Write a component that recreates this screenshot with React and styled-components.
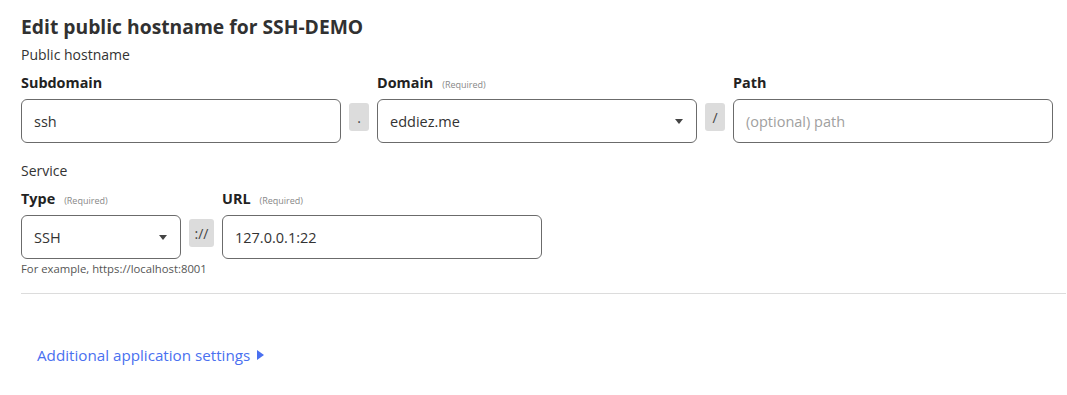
import React from 'react';
import styled, { createGlobalStyle } from 'styled-components';

const GlobalStyle = createGlobalStyle`
  body {
    margin: 0;
    background: #fff;
    font-family: "Open Sans", "Noto Sans", sans-serif;
    color: #333;
  }
`;

const Page = styled.div`
  padding: 15px 1px 0 21px;
`;

const Title = styled.h2`
  margin: 0;
  font-size: 19.3px;
  line-height: 24px;
  font-weight: 700;
  color: #313131;
`;

const SectionLabel = styled.div`
  margin-top: ${(p) => p.$top || 6}px;
  font-size: 14px;
  line-height: 20px;
  color: #333;
`;

const Row = styled.div`
  display: flex;
  align-items: flex-start;
  gap: 8px;
  margin-top: 8px;
`;

const Field = styled.div`
  display: flex;
  flex-direction: column;
  width: ${(p) => p.$width}px;
`;

const Label = styled.label`
  display: flex;
  align-items: baseline;
  height: 20px;
  margin-bottom: 6px;
  font-size: 14.4px;
  line-height: 20px;
  font-weight: 700;
  color: #222;
`;

const Required = styled.span`
  margin-left: 9px;
  font-size: 9px;
  font-weight: 400;
  color: #888;
`;

const Input = styled.div`
  box-sizing: border-box;
  display: flex;
  align-items: center;
  justify-content: space-between;
  height: 44px;
  padding: 0 13px 0 12px;
  border: 1px solid #6b6b6b;
  border-radius: 6px;
  font-size: 14.5px;
  color: ${(p) => (p.$placeholder ? '#a0a0a0' : '#333')};
`;

const Caret = styled.span`
  width: 0;
  height: 0;
  border-left: 4px solid transparent;
  border-right: 4px solid transparent;
  border-top: 5px solid #444;
`;

const Separator = styled.div`
  box-sizing: border-box;
  display: flex;
  align-items: center;
  justify-content: center;
  width: ${(p) => p.$width || 20}px;
  height: 28px;
  margin-top: 30px;
  border-radius: 3px;
  background: #dcdcdc;
  font-size: 14px;
  color: #444;
`;

const Hint = styled.div`
  margin-top: 3px;
  font-size: 11.3px;
  line-height: 14px;
  color: #555;
  white-space: nowrap;
`;

const Divider = styled.hr`
  margin: 17px 0 0;
  border: 0;
  border-top: 1px solid #dcdcdc;
`;

const Link = styled.a`
  display: inline-flex;
  align-items: center;
  gap: 7px;
  margin: 51px 0 0 16px;
  font-size: 15.2px;
  line-height: 20px;
  color: #4a70f0;
  text-decoration: none;
  cursor: pointer;
`;

const RightCaret = styled.span`
  width: 0;
  height: 0;
  border-top: 5px solid transparent;
  border-bottom: 5px solid transparent;
  border-left: 7px solid #4a70f0;
`;

export default function App() {
  return (
    <>
      <GlobalStyle />
      <Page>
        <Title>Edit public hostname for SSH-DEMO</Title>
        <SectionLabel>Public hostname</SectionLabel>
        <Row>
          <Field $width={320}>
            <Label>Subdomain</Label>
            <Input>ssh</Input>
          </Field>
          <Separator>.</Separator>
          <Field $width={320}>
            <Label>
              Domain<Required>(Required)</Required>
            </Label>
            <Input>
              eddiez.me
              <Caret />
            </Input>
          </Field>
          <Separator>/</Separator>
          <Field $width={320}>
            <Label>Path</Label>
            <Input $placeholder>(optional) path</Input>
          </Field>
        </Row>
        <SectionLabel $top={18}>Service</SectionLabel>
        <Row>
          <Field $width={160}>
            <Label>
              Type<Required>(Required)</Required>
            </Label>
            <Input>
              SSH
              <Caret />
            </Input>
            <Hint>For example, https://localhost:8001</Hint>
          </Field>
          <Separator $width={25}>://</Separator>
          <Field $width={320}>
            <Label>
              URL<Required>(Required)</Required>
            </Label>
            <Input>127.0.0.1:22</Input>
          </Field>
        </Row>
        <Divider />
        <Link>
          Additional application settings
          <RightCaret />
        </Link>
      </Page>
    </>
  );
}
